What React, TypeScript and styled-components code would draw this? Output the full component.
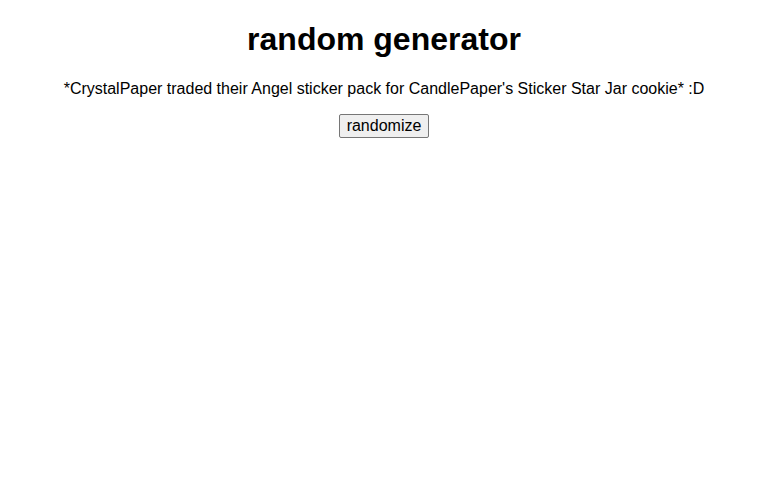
import { useState } from 'react';
import styled, { createGlobalStyle } from 'styled-components';

const GlobalStyle = createGlobalStyle`
  body {
    margin: 0 8px 8px;
    background: #ffffff;
    color: #000000;
    font-family: "Liberation Sans", Arial, sans-serif;
  }
`;

const Page = styled.main`
  text-align: center;
`;

const Title = styled.h1`
  font-size: 32px;
  font-weight: bold;
  margin: 21.44px 0;
`;

const Message = styled.p`
  font-size: 16px;
  margin: 16px 0;
`;

const RandomButton = styled.button`
  font-family: "Liberation Sans", Arial, sans-serif;
  font-size: 16px;
  color: #000000;
  background: #efefef;
  border: 1px solid #767676;
  border-radius: 2px;
  padding: 1px 7px;
  height: 24px;
  cursor: pointer;
  &:hover {
    background: #e5e5e5;
  }
`;

const messages = [
  "*CrystalPaper traded their Angel sticker pack for CandlePaper's Sticker Star Jar cookie* :D",
  "*CandlePaper gave CrystalPaper a glitter pen* :)",
  "*CrystalPaper and CandlePaper swapped their Rainbow Heart stickers* <3",
];

function App() {
  const [index, setIndex] = useState(0);

  return (
    <Page>
      <GlobalStyle />
      <Title>random generator</Title>
      <Message>{messages[index]}</Message>
      <RandomButton onClick={() => setIndex(Math.floor(Math.random() * messages.length))}>
        randomize
      </RandomButton>
    </Page>
  );
}

export default App;
